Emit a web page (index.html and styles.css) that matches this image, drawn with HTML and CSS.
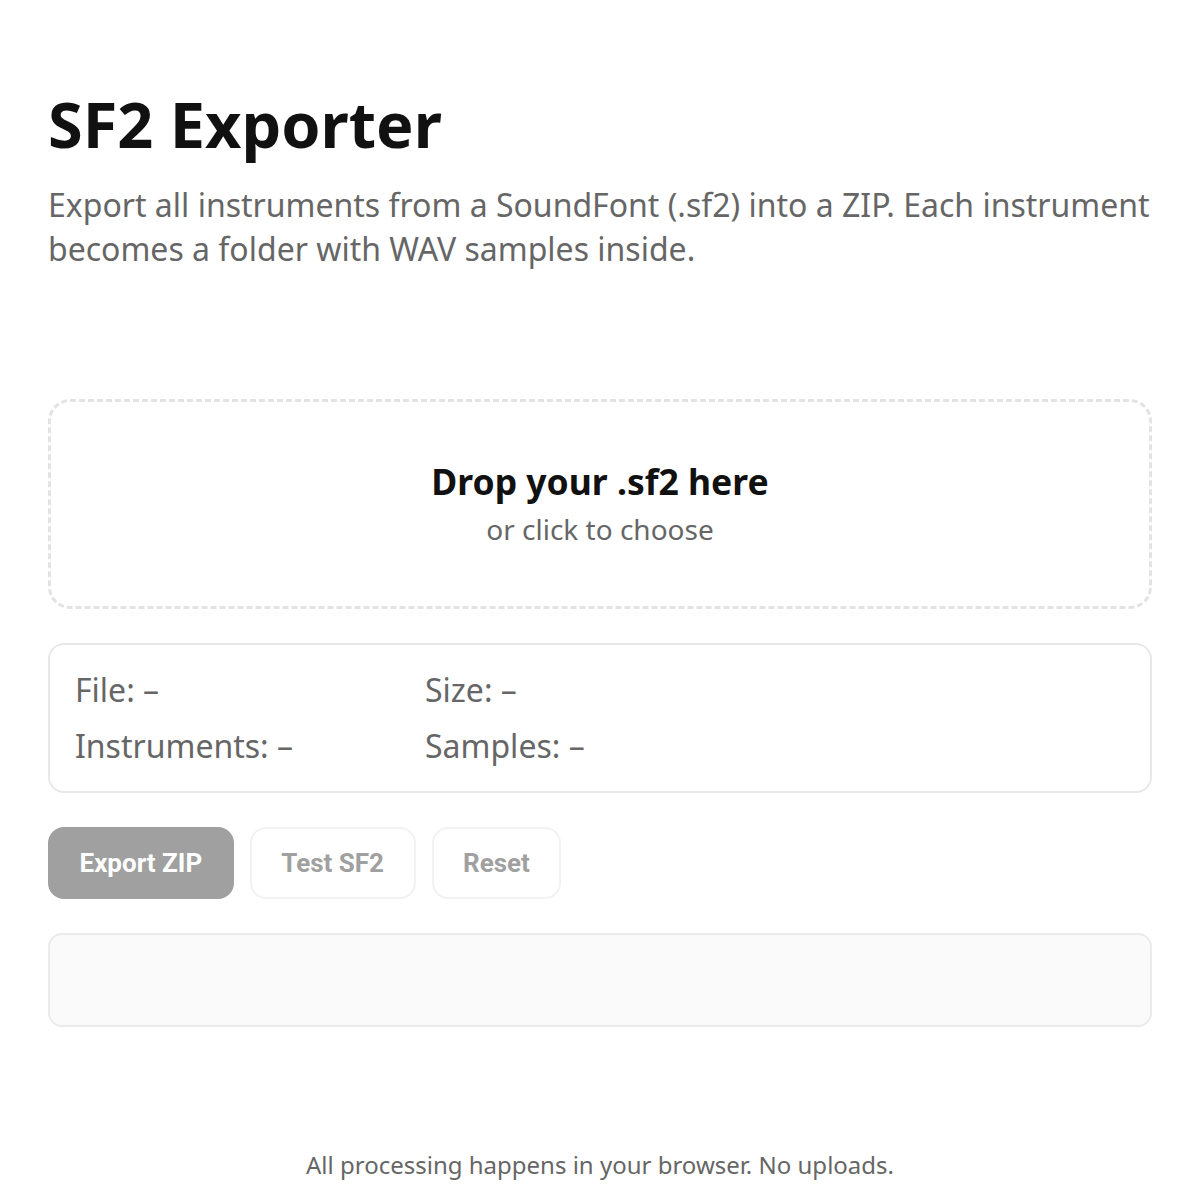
FILE: index.html
```html
<!DOCTYPE html>
<html lang="en">
<head>
  <meta charset="UTF-8">
  <meta name="viewport" content="width=device-width, initial-scale=1.0">
  <title>SF2 Exporter</title>
  <link rel="stylesheet" href="styles.css">
</head>
<body>
  <div id="app">
    <header class="header">
      <h1>SF2 Exporter</h1>
      <p class="subtitle">Export all instruments from a SoundFont (.sf2) into a ZIP. Each instrument becomes a folder with WAV samples inside.</p>
    </header>

    <div class="drop-zone" id="drop-zone">
      <div class="drop-title">Drop your .sf2 here</div>
      <div class="drop-hint">or click to choose</div>
    </div>

    <div class="info-box">
      <div class="info-item">File: <span id="file-name">–</span></div>
      <div class="info-item">Size: <span id="file-size">–</span></div>
      <div class="info-item"></div>
      <div class="info-item">Instruments: <span id="inst-count">–</span></div>
      <div class="info-item">Samples: <span id="sample-count">–</span></div>
    </div>

    <div class="actions">
      <button class="btn btn-primary" id="export-button" disabled>Export ZIP</button>
      <button class="btn" id="test-button" disabled>Test SF2</button>
      <button class="btn" id="reset-button" disabled>Reset</button>
    </div>

    <div class="log" id="log"></div>

    <footer class="footer">All processing happens in your browser. No uploads.</footer>
  </div>
</body>
</html>
```

FILE: styles.css
```css
html, body {
  margin: 0;
  padding: 0;
  background: #ffffff;
}

body {
  font-family: "Noto Sans", sans-serif;
  color: #111;
}

#app {
  padding: 48px 48px 20px;
  display: flex;
  flex-direction: column;
}

.header {
  margin-bottom: 128px;
}

h1 {
  font-size: 63px;
  font-weight: 700;
  line-height: 1.2;
  margin: 38px 0 21px;
  color: #111;
}

.subtitle {
  font-size: 32px;
  line-height: 44px;
  color: #666;
  margin: 0;
}

.drop-zone {
  border: 3px dashed #e3e3e3;
  border-radius: 22px;
  height: 210px;
  box-sizing: border-box;
  display: flex;
  flex-direction: column;
  justify-content: center;
  align-items: center;
  cursor: pointer;
}

.drop-title {
  font-size: 35.5px;
  font-weight: 700;
  color: #111;
  line-height: 1.3;
}

.drop-hint {
  font-size: 28px;
  color: #666;
  line-height: 1.4;
  margin-top: 6px;
}

.info-box {
  margin-top: 34px;
  border: 2px solid #e8e8e8;
  border-radius: 16px;
  padding: 23px 25px;
  display: grid;
  grid-template-columns: 1fr 1fr 1fr;
  row-gap: 12px;
  font-size: 32px;
  line-height: 44px;
  color: #666;
}

.actions {
  margin-top: 34px;
  display: flex;
  gap: 16px;
}

.btn {
  font-family: Roboto, sans-serif;
  font-size: 26px;
  font-weight: 700;
  height: 72px;
  padding: 0 29.5px;
  border-radius: 16px;
  border: 2px solid #f2f2f2;
  background: #ffffff;
  color: #a0a0a0;
  cursor: pointer;
}

.btn-primary {
  background: #a0a0a0;
  border-color: #a0a0a0;
  color: #ffffff;
}

.log {
  margin-top: 34px;
  height: 94px;
  box-sizing: border-box;
  background: #fafafa;
  border: 2px solid #ebebeb;
  border-radius: 14px;
}

.footer {
  margin-top: 121px;
  text-align: center;
  font-size: 24px;
  color: #666;
}
```
